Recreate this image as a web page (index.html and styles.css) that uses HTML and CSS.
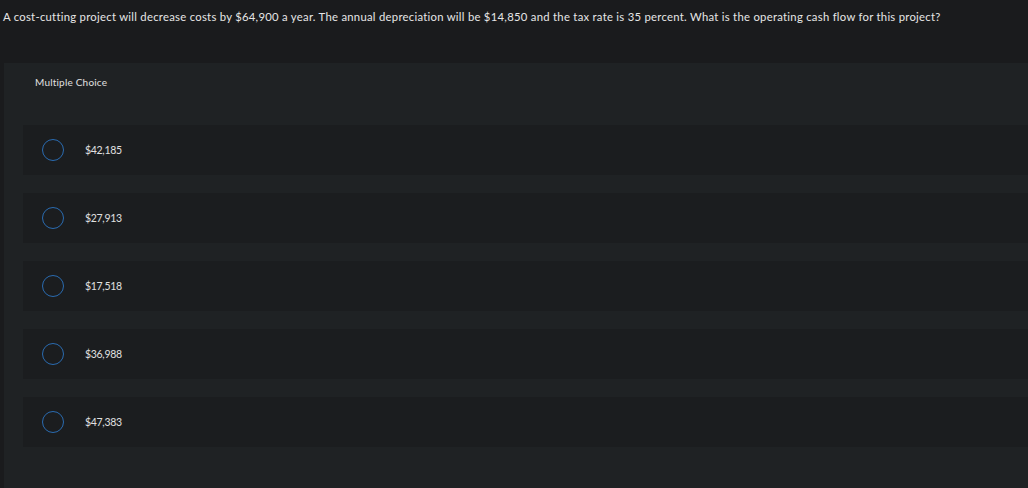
FILE: index.html
```html
<!DOCTYPE html>
<html>
<head>
<meta charset="utf-8">
<link rel="stylesheet" href="styles.css">
</head>
<body>
<p class="question">A cost-cutting project will decrease costs by $64,900 a year. The annual depreciation will be $14,850 and the tax rate is 35 percent. What is the operating cash flow for this project?</p>
<section class="panel">
  <div class="panel-head">Multiple Choice</div>
  <ul class="choices">
    <li class="choice"><span class="radio"></span><span class="label">$42,185</span></li>
    <li class="choice"><span class="radio"></span><span class="label">$27,913</span></li>
    <li class="choice"><span class="radio"></span><span class="label">$17,518</span></li>
    <li class="choice"><span class="radio"></span><span class="label">$36,988</span></li>
    <li class="choice"><span class="radio"></span><span class="label">$47,383</span></li>
  </ul>
</section>
</body>
</html>
```

FILE: styles.css
```css
html, body {
  margin: 0;
  padding: 0;
  background: #1a1b1d;
  height: 100%;
}
body {
  font-family: "Lato", "Liberation Sans", sans-serif;
  color: #e2e2e2;
  overflow: hidden;
}
.question {
  margin: 0;
  padding: 10px 0 0 3px;
  height: 63px;
  box-sizing: border-box;
  font-family: "Lato", "Liberation Sans", sans-serif;
  font-size: 11.3px;
  letter-spacing: 0.27px;
  line-height: 14px;
  color: #e6e6e6;
}
.panel {
  margin-left: 4px;
  background: #1f2224;
  height: 425px;
}
.panel-head {
  height: 37px;
  padding-left: 31px;
  font-size: 10px;
  line-height: 38px;
  color: #e0e0e0;
  letter-spacing: 0.2px;
}
.choices {
  list-style: none;
  margin: 0;
  padding: 25px 0 0 19px;
  display: flex;
  flex-direction: column;
  gap: 18px;
}
.choice {
  height: 50px;
  background: #1b1d1f;
  display: flex;
  align-items: center;
  padding-left: 19px;
}
.radio {
  width: 20px;
  height: 20px;
  border: 1.4px solid #2a6bb0;
  border-radius: 50%;
  flex: none;
}
.label {
  margin-left: 21px;
  font-size: 10.5px;
  color: #e0e0e0;
  letter-spacing: -0.3px;
}
```
